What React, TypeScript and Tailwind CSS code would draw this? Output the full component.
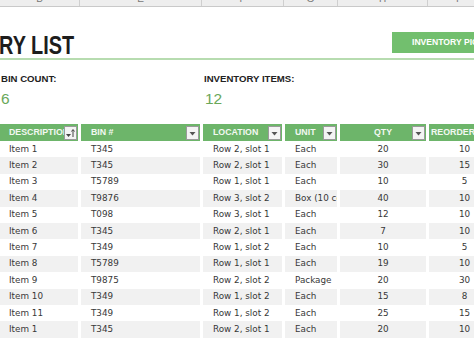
import React from 'react';

type Row = [string, string, string, string, number, number];

const rows: Row[] = [
  ['Item 1', 'T345', 'Row 2, slot 1', 'Each', 20, 10],
  ['Item 2', 'T345', 'Row 2, slot 1', 'Each', 30, 15],
  ['Item 3', 'T5789', 'Row 1, slot 1', 'Each', 10, 5],
  ['Item 4', 'T9876', 'Row 3, slot 2', 'Box (10 count)', 40, 10],
  ['Item 5', 'T098', 'Row 3, slot 1', 'Each', 12, 10],
  ['Item 6', 'T345', 'Row 2, slot 1', 'Each', 7, 10],
  ['Item 7', 'T349', 'Row 1, slot 2', 'Each', 10, 5],
  ['Item 8', 'T5789', 'Row 1, slot 1', 'Each', 19, 10],
  ['Item 9', 'T9875', 'Row 2, slot 2', 'Package', 20, 30],
  ['Item 10', 'T349', 'Row 1, slot 2', 'Each', 15, 8],
  ['Item 11', 'T349', 'Row 1, slot 2', 'Each', 25, 15],
  ['Item 1', 'T345', 'Row 2, slot 1', 'Each', 20, 10],
];

const grid = 'grid grid-cols-[78px_119px_79px_52px_86px_71px] gap-x-[3px]';

function FilterButton({ sorted }: { sorted?: boolean }) {
  return (
    <span className="absolute right-[1px] top-[2px] w-[13px] h-[14px] bg-[#f4f4f4] border border-[#9a9a9a] flex items-center justify-center">
      {sorted ? (
        <svg width="11" height="10" viewBox="0 0 11 10">
          <path d="M1 6h5l-2.5 3z" fill="#444" />
          <path d="M8 9V2M6.5 3.5L8 1.5l1.5 2" stroke="#444" strokeWidth="1" fill="none" />
        </svg>
      ) : (
        <svg width="7" height="5" viewBox="0 0 7 5">
          <path d="M0.5 1h6L3.5 4.5z" fill="#555" />
        </svg>
      )}
    </span>
  );
}

function HeaderCell({ label, filter, sorted, center, className }: { label: string; filter?: boolean; sorted?: boolean; center?: boolean; className?: string }) {
  return (
    <div className={`relative h-[17px] bg-[#6db56a] text-[#f3f8f2] font-bold text-[8.8px] flex items-center overflow-hidden whitespace-nowrap pt-[1px] ${center ? 'justify-center' : ''} ${className ?? ''}`}>
      <span>{label}</span>
      {filter && <FilterButton sorted={sorted} />}
    </div>
  );
}

export default function App() {
  const strip = [
    { w: 'w-[80px]', l: 'B' },
    { w: 'w-[122px]', l: 'E' },
    { w: 'w-[82px]', l: 'F' },
    { w: 'w-[54px]', l: 'G' },
    { w: 'w-[90px]', l: 'H' },
    { w: 'w-[60px]', l: 'I' },
  ];

  return (
    <div className="w-[474px] h-[355px] bg-white overflow-hidden font-['Liberation_Sans',Arial,sans-serif]">
      <div className="h-[7px] flex bg-[#eeeeee] border-b border-[#c9c9c9] overflow-hidden">
        {strip.map(s => (
          <div key={s.l} className={`${s.w} shrink-0 border-r border-[#cfcfcf] flex justify-center overflow-hidden`}>
            <span className="text-[10px] leading-[10px] text-[#777] -mt-[6px]">{s.l}</span>
          </div>
        ))}
      </div>

      <div className="flex items-start justify-between mt-[25px] h-[26px]">
        <h1 className="font-bold text-[25.5px] leading-[26px] text-[#1d1d1d] -ml-[1px] scale-x-[0.78] origin-left whitespace-nowrap">RY LIST</h1>
        <div className="w-[90px] h-[21px] mr-[-8px] bg-[#72bf6e] flex items-center pl-[20px] text-white font-bold text-[8.6px] whitespace-nowrap overflow-hidden">
          INVENTORY PICK LIST
        </div>
      </div>
      <div className="h-[2px] bg-[#b7dcb0]" />

      <div className="flex mt-[13px]">
        <div className="w-[204px] pl-[1px]">
          <div className="font-bold text-[9.6px] leading-[12px] text-[#222]">BIN COUNT:</div>
          <div className="text-[15.5px] leading-[18px] text-[#6aa85a] mt-[5px]">6</div>
        </div>
        <div>
          <div className="font-bold text-[9.6px] leading-[12px] text-[#222]">INVENTORY ITEMS:</div>
          <div className="text-[15.5px] leading-[18px] text-[#6aa85a] mt-[5px] pl-[1px]">12</div>
        </div>
      </div>

      <div className="mt-[16px] w-[500px]">
        <div className={grid}>
          <HeaderCell label="DESCRIPTION" filter sorted className="pl-[9px]" />
          <HeaderCell label="BIN #" filter className="pl-[10px]" />
          <HeaderCell label="LOCATION" filter className="pl-[10px]" />
          <HeaderCell label="UNIT" filter className="pl-[10px]" />
          <HeaderCell label="QTY" filter center />
          <HeaderCell label="REORDER LEVEL" className="pl-[2px]" />
        </div>
        <div className="font-['DejaVu_Sans',Verdana,sans-serif] text-[8.8px] text-[#383838]">
          {rows.map((r, i) => {
            const bg = i % 2 === 1 ? 'bg-[#f1f1f1]' : 'bg-white';
            const cell = `h-[16.4px] flex items-center whitespace-nowrap overflow-hidden ${bg}`;
            return (
              <div key={i} className={grid}>
                <div className={`${cell} pl-[9px]`}>{r[0]}</div>
                <div className={`${cell} pl-[10px]`}>{r[1]}</div>
                <div className={`${cell} pl-[10px]`}>{r[2]}</div>
                <div className={`${cell} pl-[10px]`}>{r[3]}</div>
                <div className={`${cell} justify-center`}>{r[4]}</div>
                <div className={`${cell} justify-center`}>{r[5]}</div>
              </div>
            );
          })}
        </div>
      </div>
    </div>
  );
}
